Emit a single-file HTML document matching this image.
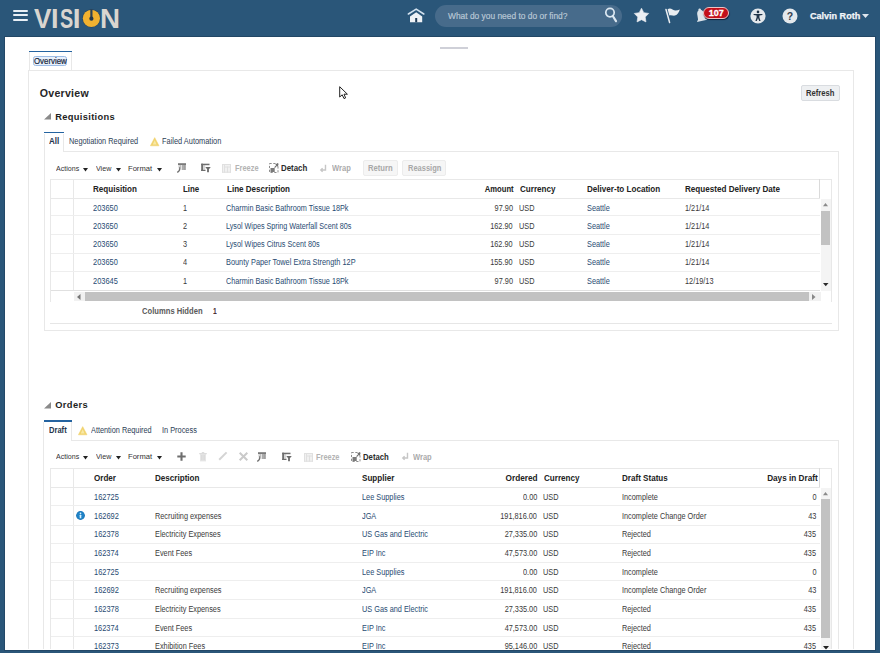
<!DOCTYPE html>
<html><head><meta charset="utf-8">
<style>
*{box-sizing:border-box;margin:0;padding:0}
html,body{width:880px;height:653px;overflow:hidden}
body{background:#2a5679;font-family:"Liberation Sans",sans-serif;position:relative;color:#333}
.a{position:absolute;white-space:nowrap}
svg.a{overflow:visible}
</style></head><body>

<div class="a" style="left:12.60px;top:9.70px;width:15.40px;height:2.20px;background:#e8eff6;border-radius:1px"></div>
<div class="a" style="left:12.60px;top:14.30px;width:15.40px;height:2.20px;background:#e8eff6;border-radius:1px"></div>
<div class="a" style="left:12.60px;top:18.90px;width:15.40px;height:2.20px;background:#e8eff6;border-radius:1px"></div>
<div class="a" style="left:33.50px;top:4.00px;font-size:28px;line-height:30px;font-weight:bold;color:#d9d5d0;transform:scaleX(0.93);transform-origin:0 0">V</div>
<div class="a" style="left:51.22px;top:4.00px;font-size:28px;line-height:30px;font-weight:bold;color:#d9d5d0;transform:scaleX(0.97);transform-origin:0 0">I</div>
<div class="a" style="left:59.79px;top:4.00px;font-size:28px;line-height:30px;font-weight:bold;color:#d9d5d0;transform:scaleX(0.71);transform-origin:0 0">S</div>
<div class="a" style="left:72.77px;top:4.00px;font-size:28px;line-height:30px;font-weight:bold;color:#d9d5d0;transform:scaleX(1.0);transform-origin:0 0">I</div>
<div class="a" style="left:99.99px;top:4.00px;font-size:28px;line-height:30px;font-weight:bold;color:#d9d5d0;transform:scaleX(0.99);transform-origin:0 0">N</div>
<svg class="a" style="left:81.6px;top:8.8px" width="19" height="19" viewBox="0 0 19 19"><circle cx="9.4" cy="9.3" r="9.1" fill="#20405e"/><circle cx="9.4" cy="9.3" r="8.6" fill="#f1b230"/><rect x="8.3" y="0" width="2.2" height="9.5" fill="#2a4258"/><circle cx="9.4" cy="9.7" r="2.1" fill="#22384c"/></svg>
<svg class="a" style="left:406px;top:7px" width="20" height="17" viewBox="0 0 20 17"><path d="M2.4 7 L10.2 2.1 L17.8 7" fill="none" stroke="#d3e2ef" stroke-width="1.6" stroke-linecap="round"/><path d="M4 9.6 L10.2 5.3 L16.2 9.6 V15.2 H4 Z" fill="#eef2f6"/><rect x="9.2" y="11" width="2" height="4.2" fill="#1f3a55"/></svg>
<div class="a" style="left:435.00px;top:5.00px;width:187.00px;height:22.00px;background:#476b8b;border-radius:11px"></div>
<div class="a" style="left:448.46px;top:10.27px;font-size:9.6px;line-height:12.0px;font-weight:400;color:#b9c7d5;letter-spacing:0px;transform:scaleX(0.8749);transform-origin:0 0;-webkit-text-stroke:0.2px #b9c7d5">What do you need to do or find?</div>
<svg class="a" style="left:604px;top:7px" width="14" height="16" viewBox="0 0 14 16"><circle cx="6" cy="5.6" r="4.2" fill="none" stroke="#dce8f2" stroke-width="1.7"/><path d="M8.8 9 L12 14.2" stroke="#dce8f2" stroke-width="2.2" stroke-linecap="round"/></svg>
<svg class="a" style="left:634.2px;top:8.2px" width="15" height="15" viewBox="0 0 15 15"><path d="M7.50 0.20 L9.79 4.64 L14.73 5.45 L11.21 9.01 L11.97 13.95 L7.50 11.70 L3.03 13.95 L3.79 9.01 L0.27 5.45 L5.21 4.64 Z" fill="#eceff3" stroke="#eceff3" stroke-width="0.6" stroke-linejoin="round"/></svg>
<svg class="a" style="left:664px;top:8px" width="17" height="16" viewBox="0 0 17 16"><path d="M2 1.5 L5.6 14.5" stroke="#e9edf1" stroke-width="1.5" stroke-linecap="round"/><path d="M3.6 1.2 C5.5 0.2 7 0.6 8.5 1.6 C10.5 2.8 12.5 2.8 15.8 1.6 C15 4.5 13.5 7 11 7.6 C9 8 7.5 6.8 5.4 7.5 Z" fill="#e9edf1"/></svg>
<svg class="a" style="left:695px;top:8px" width="12" height="16" viewBox="0 0 12 16"><g transform="rotate(-12 6 8)"><path d="M6 1.8 C3.2 1.8 2.6 4.5 2.6 7 L2.4 10.8 L0.8 13 L11.2 13 L9.6 10.8 L9.4 7 C9.4 4.5 8.8 1.8 6 1.8 Z" fill="#dde4ea"/><circle cx="6" cy="1.6" r="1.3" fill="#dde4ea"/></g></svg>
<div class="a" style="left:703.4px;top:6.8px;width:25.6px;height:12.2px;border-radius:6.1px;background:#c3101a;border:1px solid #eec4c4;box-shadow:0.5px 1px 0.8px rgba(10,20,40,0.8);color:#fff;font-size:9px;font-weight:bold;line-height:10.2px;text-align:center;-webkit-text-stroke:0.3px #fff">107</div>
<svg class="a" style="left:750.2px;top:7.6px" width="16" height="16" viewBox="0 0 16 16"><circle cx="8" cy="8" r="7.6" fill="#e4e8ec"/><circle cx="8" cy="3.9" r="1.3" fill="#203448"/><path d="M3.6 6 L12.4 6 L12.4 6.9 L9.4 7.5 L9.4 9.6 L10.6 12.9 L9.2 12.9 L8 10 L6.8 12.9 L5.4 12.9 L6.6 9.6 L6.6 7.5 L3.6 6.9 Z" fill="#203448"/></svg>
<svg class="a" style="left:782.0px;top:7.8px" width="16" height="16" viewBox="0 0 16 16"><circle cx="8" cy="8" r="7.5" fill="#e4e8ec"/><text x="8" y="11.9" text-anchor="middle" font-family="Liberation Sans" font-weight="bold" font-size="10.5" fill="#35404c">?</text></svg>
<div class="a" style="left:810.14px;top:10.07px;font-size:9.4px;line-height:11.75px;font-weight:700;color:#f4f7fa;letter-spacing:0px;transform:scaleX(0.9634);transform-origin:0 0;-webkit-text-stroke:0.25px #f4f7fa">Calvin Roth</div>
<svg class="a" style="left:862px;top:14px" width="7" height="4" viewBox="0 0 7 4"><path d="M0 0 L7 0 L3.5 4 Z" fill="#dfe6ee"/></svg>
<div class="a" style="left:4.00px;top:36.00px;width:872.00px;height:1.00px;background:#224765;"></div>
<div class="a" style="left:4.00px;top:36.00px;width:1.00px;height:614.00px;background:#234868;"></div>
<div class="a" style="left:875.00px;top:36.00px;width:1.00px;height:614.00px;background:#234868;"></div>
<div class="a" style="left:5.00px;top:37.00px;width:870.00px;height:613.00px;background:#fff;"></div>
<div class="a" style="left:440.00px;top:47.00px;width:28.00px;height:2.00px;background:#cfd0d8;"></div>
<div class="a" style="left:29.00px;top:50.80px;width:43.00px;height:1.40px;background:#2463a0;"></div>
<div class="a" style="left:29.00px;top:52.00px;width:1.00px;height:18.00px;background:#e8e8e8;"></div>
<div class="a" style="left:71.00px;top:52.00px;width:1.00px;height:18.00px;background:#e8e8e8;"></div>
<div class="a" style="left:33.40px;top:56.00px;width:33.80px;height:10.00px;background:#e8f0fb;border:1px solid #9dbde6;border-radius:2.5px"></div>
<div class="a" style="left:33.73px;top:55.65px;font-size:8.6px;line-height:10.75px;font-weight:400;color:#14243a;letter-spacing:0px;transform:scaleX(0.9139);transform-origin:0 0;-webkit-text-stroke:0.2px #14243a">Overview</div>
<div class="a" style="left:28.00px;top:70.00px;width:826.00px;height:1.00px;background:#e8e8e8;"></div>
<div class="a" style="left:28.00px;top:70.00px;width:1.00px;height:579.00px;background:#e8e8e8;"></div>
<div class="a" style="left:853.00px;top:70.00px;width:1.00px;height:579.00px;background:#e8e8e8;"></div>
<div class="a" style="left:39.78px;top:86.90px;font-size:10.6px;line-height:13.25px;font-weight:700;color:#262626;letter-spacing:0.25px;">Overview</div>
<div class="a" style="left:801.00px;top:85.00px;width:39.00px;height:16.00px;background:#eef0f2;border:1px solid #d9dce0;border-radius:2px"></div>
<div class="a" style="left:806.18px;top:87.74px;font-size:8.4px;line-height:10.5px;font-weight:700;color:#333;letter-spacing:0px;transform:scaleX(0.9140);transform-origin:0 0;">Refresh</div>
<svg class="a" style="left:44.2px;top:112.5px" width="7" height="7" viewBox="0 0 7 7"><path d="M7 0 L7 6.5 L0 6.5 Z" fill="#8a8a8a"/></svg>
<div class="a" style="left:55.27px;top:111.77px;font-size:9.3px;line-height:11.62px;font-weight:700;color:#1e1e1e;letter-spacing:0.33px;">Requisitions</div>
<div class="a" style="left:44.00px;top:131.60px;width:20.00px;height:1.60px;background:#2463a0;"></div>
<div class="a" style="left:44.00px;top:133.50px;width:1.00px;height:17.50px;background:#e8e8e8;"></div>
<div class="a" style="left:63.00px;top:133.50px;width:1.00px;height:17.50px;background:#e8e8e8;"></div>
<div class="a" style="left:49.00px;top:135.74px;font-size:8.4px;line-height:10.5px;font-weight:700;color:#24344c;letter-spacing:0px;transform:scaleX(0.9564);transform-origin:0 0;">All</div>
<div class="a" style="left:68.99px;top:135.74px;font-size:8.4px;line-height:10.5px;font-weight:400;color:#2c3e56;letter-spacing:0px;transform:scaleX(0.8777);transform-origin:0 0;">Negotiation Required</div>
<svg class="a" style="left:150.2px;top:137.3px" width="10" height="10" viewBox="0 0 10 10"><path d="M4.7 0.6 L9 8.8 L0.4 8.8 Z" fill="#f1d36e" stroke="#f1d36e" stroke-width="0.5" stroke-linejoin="round"/><path d="M4.7 3.2 L6.6 7.6 L2.8 7.6 Z" fill="#f8e9a8"/></svg>
<div class="a" style="left:161.99px;top:135.74px;font-size:8.4px;line-height:10.5px;font-weight:400;color:#2c3e56;letter-spacing:0px;transform:scaleX(0.8845);transform-origin:0 0;">Failed Automation</div>
<div class="a" style="left:63.00px;top:151.00px;width:776.00px;height:1.00px;background:#e8e8e8;"></div>
<div class="a" style="left:44.00px;top:151.00px;width:1.00px;height:180.00px;background:#e8e8e8;"></div>
<div class="a" style="left:838.00px;top:151.00px;width:1.00px;height:180.00px;background:#e8e8e8;"></div>
<div class="a" style="left:44.00px;top:330.00px;width:795.00px;height:1.00px;background:#e8e8e8;"></div>
<div class="a" style="left:56.08px;top:163.83px;font-size:8.0px;line-height:10.0px;font-weight:400;color:#333;letter-spacing:0px;transform:scaleX(0.8828);transform-origin:0 0;">Actions</div>
<svg class="a" style="left:83.4px;top:167.6px" width="5" height="4" viewBox="0 0 5 4"><path d="M0 0 L5 0 L2.5 3.6 Z" fill="#222"/></svg>
<div class="a" style="left:96.36px;top:163.83px;font-size:8.0px;line-height:10.0px;font-weight:400;color:#333;letter-spacing:0px;transform:scaleX(0.8906);transform-origin:0 0;">View</div>
<svg class="a" style="left:116.2px;top:167.6px" width="5" height="4" viewBox="0 0 5 4"><path d="M0 0 L5 0 L2.5 3.6 Z" fill="#222"/></svg>
<div class="a" style="left:128.27px;top:163.83px;font-size:8.0px;line-height:10.0px;font-weight:400;color:#333;letter-spacing:0px;transform:scaleX(0.9504);transform-origin:0 0;">Format</div>
<svg class="a" style="left:156.7px;top:167.6px" width="5" height="4" viewBox="0 0 5 4"><path d="M0 0 L5 0 L2.5 3.6 Z" fill="#222"/></svg>
<svg class="a" style="left:174px;top:160px" width="16" height="16" viewBox="0 0 16 16"><rect x="4" y="5" width="8" height="5" fill="#e2e2e2"/><rect x="8.6" y="5" width="3.4" height="5" fill="#b0b0b0"/><path d="M6.2 5 V10 M8.6 5 V10 M10.4 5 V10" stroke="#9a9a9a" stroke-width="0.7"/><rect x="4" y="3.2" width="8" height="1.8" fill="#7a7a7a"/><path d="M5.8 7.2 C6.1 9.4 5.8 11.2 3.2 12.3" fill="none" stroke="#ffffff" stroke-width="2.6"/><path d="M5.8 7.2 C6.1 9.4 5.8 11.2 3.2 12.3" fill="none" stroke="#6f6f6f" stroke-width="1.4"/></svg>
<svg class="a" style="left:198px;top:160px" width="16" height="16" viewBox="0 0 16 16"><rect x="5" y="5.1" width="2.2" height="4.7" fill="#d6d6d6"/><rect x="3.2" y="3.7" width="8.3" height="1.5" fill="#6e6e6e"/><rect x="3.2" y="3.7" width="1.8" height="7.3" fill="#6e6e6e"/><rect x="3.2" y="9.8" width="4.3" height="1.2" fill="#6e6e6e"/><path d="M7.3 7 H12.8 L10.9 9.2 V12.3 H9.1 V9.2 Z" fill="#6a6a6a"/></svg>
<svg class="a" style="left:219px;top:160px" width="16" height="16" viewBox="0 0 16 16"><rect x="3" y="4" width="9" height="8.7" fill="#f1f1f1"/><path d="M3 4.5 H12 M3.5 4 V12.7 M5.5 4 V12.7 M8.5 6.5 V12.7 M11.5 4 V12.7 M5.5 7 H12 M3 12.2 H12" stroke="#e0e0e0" stroke-width="1"/></svg>
<div class="a" style="left:234.50px;top:163.44px;font-size:8.4px;line-height:10.5px;font-weight:700;color:#b4b4b4;letter-spacing:0px;transform:scaleX(0.8887);transform-origin:0 0;">Freeze</div>
<svg class="a" style="left:266px;top:160px" width="16" height="16" viewBox="0 0 16 16"><rect x="3.5" y="3.5" width="8.5" height="9" fill="none" stroke="#8c8c8c" stroke-width="1" stroke-dasharray="2.2 1.6"/><rect x="4.5" y="8" width="4.2" height="4" fill="#7a7a7a"/><path d="M8.6 7.6 L11.4 4.6 M9.6 4.4 H11.6 V6.4" fill="none" stroke="#707070" stroke-width="1.1"/></svg>
<div class="a" style="left:281.47px;top:163.44px;font-size:8.4px;line-height:10.5px;font-weight:700;color:#2a2a2a;letter-spacing:0px;transform:scaleX(0.9398);transform-origin:0 0;">Detach</div>
<svg class="a" style="left:319px;top:163.5px" width="10" height="10" viewBox="0 0 10 10"><path d="M6.5 0.8 V6 H2 M3.6 4.2 L1.8 6 L3.6 7.8" fill="none" stroke="#c6c6c6" stroke-width="1.4"/></svg>
<div class="a" style="left:331.50px;top:163.44px;font-size:8.4px;line-height:10.5px;font-weight:700;color:#ababab;letter-spacing:0px;transform:scaleX(0.9026);transform-origin:0 0;">Wrap</div>
<div class="a" style="left:363.30px;top:160.30px;width:34.50px;height:16.00px;background:#f6f6f6;border:1px solid #ececec;border-radius:2px"></div>
<div class="a" style="left:368.18px;top:163.44px;font-size:8.4px;line-height:10.5px;font-weight:700;color:#a8a8a8;letter-spacing:0px;transform:scaleX(0.9155);transform-origin:0 0;">Return</div>
<div class="a" style="left:402.40px;top:160.30px;width:43.70px;height:16.00px;background:#f6f6f6;border:1px solid #ececec;border-radius:2px"></div>
<div class="a" style="left:407.79px;top:163.44px;font-size:8.4px;line-height:10.5px;font-weight:700;color:#a8a8a8;letter-spacing:0px;transform:scaleX(0.8961);transform-origin:0 0;">Reassign</div>
<div class="a" style="left:50.20px;top:179.00px;width:781.80px;height:1.00px;background:#e8e8e8;"></div>
<div class="a" style="left:50.00px;top:179.30px;width:1.00px;height:122.70px;background:#e8e8e8;"></div>
<div class="a" style="left:73.00px;top:179.30px;width:1.00px;height:111.70px;background:#e8e8e8;"></div>
<div class="a" style="left:831.00px;top:179.30px;width:1.00px;height:122.70px;background:#e8e8e8;"></div>
<div class="a" style="left:819.00px;top:179.30px;width:1.00px;height:19.20px;background:#dadada;"></div>
<div class="a" style="left:50.70px;top:198.00px;width:769.30px;height:1.00px;background:#e8e8e8;"></div>
<div class="a" style="left:93.25px;top:183.64px;font-size:8.4px;line-height:10.5px;font-weight:700;color:#222;letter-spacing:0px;transform:scaleX(0.9631);transform-origin:0 0;">Requisition</div>
<div class="a" style="left:183.46px;top:183.64px;font-size:8.4px;line-height:10.5px;font-weight:700;color:#222;letter-spacing:0px;transform:scaleX(0.9439);transform-origin:0 0;">Line</div>
<div class="a" style="left:226.76px;top:183.64px;font-size:8.4px;line-height:10.5px;font-weight:700;color:#222;letter-spacing:0px;transform:scaleX(0.9607);transform-origin:0 0;">Line Description</div>
<div class="a" style="right:366.31px;top:183.64px;font-size:8.4px;line-height:10.5px;font-weight:700;color:#222;letter-spacing:0px;transform:scaleX(0.9135);transform-origin:100% 0;">Amount</div>
<div class="a" style="left:519.68px;top:183.64px;font-size:8.4px;line-height:10.5px;font-weight:700;color:#222;letter-spacing:0px;transform:scaleX(0.9650);transform-origin:0 0;">Currency</div>
<div class="a" style="left:587.15px;top:183.64px;font-size:8.4px;line-height:10.5px;font-weight:700;color:#222;letter-spacing:0px;transform:scaleX(0.9650);transform-origin:0 0;">Deliver-to Location</div>
<div class="a" style="left:684.95px;top:183.64px;font-size:8.4px;line-height:10.5px;font-weight:700;color:#222;letter-spacing:0px;transform:scaleX(0.9675);transform-origin:0 0;">Requested Delivery Date</div>
<div class="a" style="left:50.70px;top:215.00px;width:769.30px;height:1.00px;background:#eeeeee;"></div>
<div class="a" style="left:93.03px;top:202.84px;font-size:8.4px;line-height:10.5px;font-weight:400;color:#284b72;letter-spacing:0px;transform:scaleX(0.8871);transform-origin:0 0;">203650</div>
<div class="a" style="left:183.40px;top:202.84px;font-size:8.4px;line-height:10.5px;font-weight:400;color:#3a3a3a;letter-spacing:0px;transform:scaleX(0.8750);transform-origin:0 0;">1</div>
<div class="a" style="left:226.44px;top:202.84px;font-size:8.4px;line-height:10.5px;font-weight:400;color:#284b72;letter-spacing:0px;transform:scaleX(0.8686);transform-origin:0 0;">Charmin Basic Bathroom Tissue 18Pk</div>
<div class="a" style="right:366.92px;top:202.84px;font-size:8.4px;line-height:10.5px;font-weight:400;color:#3a3a3a;letter-spacing:0px;transform:scaleX(0.8750);transform-origin:100% 0;">97.90</div>
<div class="a" style="left:519.43px;top:202.84px;font-size:8.4px;line-height:10.5px;font-weight:400;color:#3a3a3a;letter-spacing:0px;transform:scaleX(0.8750);transform-origin:0 0;">USD</div>
<div class="a" style="left:586.67px;top:202.84px;font-size:8.4px;line-height:10.5px;font-weight:400;color:#284b72;letter-spacing:0px;transform:scaleX(0.8750);transform-origin:0 0;">Seattle</div>
<div class="a" style="left:684.95px;top:202.84px;font-size:8.4px;line-height:10.5px;font-weight:400;color:#3a3a3a;letter-spacing:0px;transform:scaleX(0.8750);transform-origin:0 0;">1/21/14</div>
<div class="a" style="left:50.70px;top:234.00px;width:769.30px;height:1.00px;background:#eeeeee;"></div>
<div class="a" style="left:93.03px;top:221.04px;font-size:8.4px;line-height:10.5px;font-weight:400;color:#284b72;letter-spacing:0px;transform:scaleX(0.8871);transform-origin:0 0;">203650</div>
<div class="a" style="left:183.40px;top:221.04px;font-size:8.4px;line-height:10.5px;font-weight:400;color:#3a3a3a;letter-spacing:0px;transform:scaleX(0.8750);transform-origin:0 0;">2</div>
<div class="a" style="left:226.21px;top:221.04px;font-size:8.4px;line-height:10.5px;font-weight:400;color:#284b72;letter-spacing:0px;transform:scaleX(0.8581);transform-origin:0 0;">Lysol Wipes Spring Waterfall Scent 80s</div>
<div class="a" style="right:366.92px;top:221.04px;font-size:8.4px;line-height:10.5px;font-weight:400;color:#3a3a3a;letter-spacing:0px;transform:scaleX(0.8750);transform-origin:100% 0;">162.90</div>
<div class="a" style="left:519.43px;top:221.04px;font-size:8.4px;line-height:10.5px;font-weight:400;color:#3a3a3a;letter-spacing:0px;transform:scaleX(0.8750);transform-origin:0 0;">USD</div>
<div class="a" style="left:586.67px;top:221.04px;font-size:8.4px;line-height:10.5px;font-weight:400;color:#284b72;letter-spacing:0px;transform:scaleX(0.8750);transform-origin:0 0;">Seattle</div>
<div class="a" style="left:684.95px;top:221.04px;font-size:8.4px;line-height:10.5px;font-weight:400;color:#3a3a3a;letter-spacing:0px;transform:scaleX(0.8750);transform-origin:0 0;">1/21/14</div>
<div class="a" style="left:50.70px;top:253.00px;width:769.30px;height:1.00px;background:#eeeeee;"></div>
<div class="a" style="left:93.03px;top:239.14px;font-size:8.4px;line-height:10.5px;font-weight:400;color:#284b72;letter-spacing:0px;transform:scaleX(0.8871);transform-origin:0 0;">203650</div>
<div class="a" style="left:183.40px;top:239.14px;font-size:8.4px;line-height:10.5px;font-weight:400;color:#3a3a3a;letter-spacing:0px;transform:scaleX(0.8750);transform-origin:0 0;">3</div>
<div class="a" style="left:226.20px;top:239.14px;font-size:8.4px;line-height:10.5px;font-weight:400;color:#284b72;letter-spacing:0px;transform:scaleX(0.8616);transform-origin:0 0;">Lysol Wipes Citrus Scent 80s</div>
<div class="a" style="right:366.92px;top:239.14px;font-size:8.4px;line-height:10.5px;font-weight:400;color:#3a3a3a;letter-spacing:0px;transform:scaleX(0.8750);transform-origin:100% 0;">162.90</div>
<div class="a" style="left:519.43px;top:239.14px;font-size:8.4px;line-height:10.5px;font-weight:400;color:#3a3a3a;letter-spacing:0px;transform:scaleX(0.8750);transform-origin:0 0;">USD</div>
<div class="a" style="left:586.67px;top:239.14px;font-size:8.4px;line-height:10.5px;font-weight:400;color:#284b72;letter-spacing:0px;transform:scaleX(0.8750);transform-origin:0 0;">Seattle</div>
<div class="a" style="left:684.95px;top:239.14px;font-size:8.4px;line-height:10.5px;font-weight:400;color:#3a3a3a;letter-spacing:0px;transform:scaleX(0.8750);transform-origin:0 0;">1/21/14</div>
<div class="a" style="left:50.70px;top:271.00px;width:769.30px;height:1.00px;background:#eeeeee;"></div>
<div class="a" style="left:93.03px;top:257.44px;font-size:8.4px;line-height:10.5px;font-weight:400;color:#284b72;letter-spacing:0px;transform:scaleX(0.8871);transform-origin:0 0;">203650</div>
<div class="a" style="left:183.40px;top:257.44px;font-size:8.4px;line-height:10.5px;font-weight:400;color:#3a3a3a;letter-spacing:0px;transform:scaleX(0.8750);transform-origin:0 0;">4</div>
<div class="a" style="left:226.19px;top:257.44px;font-size:8.4px;line-height:10.5px;font-weight:400;color:#284b72;letter-spacing:0px;transform:scaleX(0.8791);transform-origin:0 0;">Bounty Paper Towel Extra Strength 12P</div>
<div class="a" style="right:366.92px;top:257.44px;font-size:8.4px;line-height:10.5px;font-weight:400;color:#3a3a3a;letter-spacing:0px;transform:scaleX(0.8750);transform-origin:100% 0;">155.90</div>
<div class="a" style="left:519.43px;top:257.44px;font-size:8.4px;line-height:10.5px;font-weight:400;color:#3a3a3a;letter-spacing:0px;transform:scaleX(0.8750);transform-origin:0 0;">USD</div>
<div class="a" style="left:586.67px;top:257.44px;font-size:8.4px;line-height:10.5px;font-weight:400;color:#284b72;letter-spacing:0px;transform:scaleX(0.8750);transform-origin:0 0;">Seattle</div>
<div class="a" style="left:684.95px;top:257.44px;font-size:8.4px;line-height:10.5px;font-weight:400;color:#3a3a3a;letter-spacing:0px;transform:scaleX(0.8750);transform-origin:0 0;">1/21/14</div>
<div class="a" style="left:93.03px;top:275.74px;font-size:8.4px;line-height:10.5px;font-weight:400;color:#284b72;letter-spacing:0px;transform:scaleX(0.8878);transform-origin:0 0;">203645</div>
<div class="a" style="left:183.40px;top:275.74px;font-size:8.4px;line-height:10.5px;font-weight:400;color:#3a3a3a;letter-spacing:0px;transform:scaleX(0.8750);transform-origin:0 0;">1</div>
<div class="a" style="left:226.44px;top:275.74px;font-size:8.4px;line-height:10.5px;font-weight:400;color:#284b72;letter-spacing:0px;transform:scaleX(0.8686);transform-origin:0 0;">Charmin Basic Bathroom Tissue 18Pk</div>
<div class="a" style="right:366.92px;top:275.74px;font-size:8.4px;line-height:10.5px;font-weight:400;color:#3a3a3a;letter-spacing:0px;transform:scaleX(0.8750);transform-origin:100% 0;">97.90</div>
<div class="a" style="left:519.43px;top:275.74px;font-size:8.4px;line-height:10.5px;font-weight:400;color:#3a3a3a;letter-spacing:0px;transform:scaleX(0.8750);transform-origin:0 0;">USD</div>
<div class="a" style="left:586.67px;top:275.74px;font-size:8.4px;line-height:10.5px;font-weight:400;color:#284b72;letter-spacing:0px;transform:scaleX(0.8750);transform-origin:0 0;">Seattle</div>
<div class="a" style="left:684.95px;top:275.74px;font-size:8.4px;line-height:10.5px;font-weight:400;color:#3a3a3a;letter-spacing:0px;transform:scaleX(0.8750);transform-origin:0 0;">12/19/13</div>
<div class="a" style="left:50.70px;top:290.00px;width:769.30px;height:1.00px;background:#e0e0e0;"></div>
<div class="a" style="left:820.50px;top:198.50px;width:10.50px;height:92.00px;background:#f4f4f4;"></div>
<div class="a" style="left:821.00px;top:210.60px;width:9.00px;height:34.40px;background:#c2c2c2;"></div>
<svg class="a" style="left:822.7px;top:203.2px" width="5" height="3.5" viewBox="0 0 5 3.5"><path d="M0 3.2 L5 3.2 L2.5 0 Z" fill="#8a8a8a"/></svg>
<svg class="a" style="left:822.7px;top:282.5px" width="5.5" height="3.5" viewBox="0 0 5.5 3.5"><path d="M0 0 L5.5 0 L2.75 3.3 Z" fill="#2a2a2a"/></svg>
<div class="a" style="left:74.00px;top:291.50px;width:746.50px;height:9.50px;background:#f1f1f1;"></div>
<div class="a" style="left:85.00px;top:292.00px;width:724.00px;height:8.50px;background:#c2c2c2;"></div>
<svg class="a" style="left:77px;top:294px" width="4" height="6" viewBox="0 0 4 6"><path d="M3.5 0 L3.5 6 L0 3 Z" fill="#777"/></svg>
<svg class="a" style="left:812px;top:294px" width="4" height="6" viewBox="0 0 4 6"><path d="M0 0 L0 6 L3.5 3 Z" fill="#888"/></svg>
<div class="a" style="left:141.99px;top:305.74px;font-size:8.4px;line-height:10.5px;font-weight:700;color:#5a5a5a;letter-spacing:0px;transform:scaleX(0.9105);transform-origin:0 0;">Columns Hidden</div>
<div class="a" style="left:212.98px;top:305.74px;font-size:8.4px;line-height:10.5px;font-weight:700;color:#4a2f35;letter-spacing:0px;transform:scaleX(0.8000);transform-origin:0 0;">1</div>
<div class="a" style="left:50.00px;top:323.00px;width:782.00px;height:1.00px;background:#e6e6e6;"></div>
<svg class="a" style="left:44px;top:401.5px" width="7" height="7" viewBox="0 0 7 7"><path d="M7 0 L7 6.5 L0 6.5 Z" fill="#8a8a8a"/></svg>
<div class="a" style="left:55.23px;top:399.77px;font-size:9.3px;line-height:11.62px;font-weight:700;color:#1e1e1e;letter-spacing:0.38px;">Orders</div>
<div class="a" style="left:44.00px;top:420.20px;width:28.00px;height:1.60px;background:#2463a0;"></div>
<div class="a" style="left:43.00px;top:422.00px;width:1.00px;height:18.50px;background:#e8e8e8;"></div>
<div class="a" style="left:71.00px;top:422.00px;width:1.00px;height:18.50px;background:#e8e8e8;"></div>
<div class="a" style="left:48.89px;top:424.54px;font-size:8.4px;line-height:10.5px;font-weight:700;color:#24344c;letter-spacing:0px;transform:scaleX(0.9038);transform-origin:0 0;">Draft</div>
<svg class="a" style="left:77.8px;top:425.9px" width="10" height="10" viewBox="0 0 10 10"><path d="M4.7 0.6 L9 8.8 L0.4 8.8 Z" fill="#f1d36e" stroke="#f1d36e" stroke-width="0.5" stroke-linejoin="round"/><path d="M4.7 3.2 L6.6 7.6 L2.8 7.6 Z" fill="#f8e9a8"/></svg>
<div class="a" style="left:90.68px;top:424.54px;font-size:8.4px;line-height:10.5px;font-weight:400;color:#2c3e56;letter-spacing:0px;transform:scaleX(0.8736);transform-origin:0 0;">Attention Required</div>
<div class="a" style="left:162.32px;top:424.54px;font-size:8.4px;line-height:10.5px;font-weight:400;color:#2c3e56;letter-spacing:0px;transform:scaleX(0.8804);transform-origin:0 0;">In Process</div>
<div class="a" style="left:71.00px;top:440.00px;width:768.00px;height:1.00px;background:#e8e8e8;"></div>
<div class="a" style="left:43.00px;top:440.00px;width:1.00px;height:209.00px;background:#e8e8e8;"></div>
<div class="a" style="left:838.00px;top:440.00px;width:1.00px;height:209.00px;background:#e8e8e8;"></div>
<div class="a" style="left:56.08px;top:452.43px;font-size:8.0px;line-height:10.0px;font-weight:400;color:#333;letter-spacing:0px;transform:scaleX(0.8828);transform-origin:0 0;">Actions</div>
<svg class="a" style="left:83.4px;top:456.2px" width="5" height="4" viewBox="0 0 5 4"><path d="M0 0 L5 0 L2.5 3.6 Z" fill="#222"/></svg>
<div class="a" style="left:96.36px;top:452.43px;font-size:8.0px;line-height:10.0px;font-weight:400;color:#333;letter-spacing:0px;transform:scaleX(0.8906);transform-origin:0 0;">View</div>
<svg class="a" style="left:116.2px;top:456.2px" width="5" height="4" viewBox="0 0 5 4"><path d="M0 0 L5 0 L2.5 3.6 Z" fill="#222"/></svg>
<div class="a" style="left:128.27px;top:452.43px;font-size:8.0px;line-height:10.0px;font-weight:400;color:#333;letter-spacing:0px;transform:scaleX(0.9504);transform-origin:0 0;">Format</div>
<svg class="a" style="left:156.7px;top:456.2px" width="5" height="4" viewBox="0 0 5 4"><path d="M0 0 L5 0 L2.5 3.6 Z" fill="#222"/></svg>
<svg class="a" style="left:177.2px;top:451.5px" width="9" height="9" viewBox="0 0 9 9"><path d="M4.5 0.3 V8.7 M0.3 4.5 H8.7" stroke="#6e6e6e" stroke-width="2.1"/></svg>
<svg class="a" style="left:198.6px;top:451.5px" width="8" height="10" viewBox="0 0 8 10"><rect x="1" y="1.6" width="6" height="7.8" fill="#e6e6e6"/><path d="M0.2 1.6 H7.8 M2.8 0.6 H5.2" stroke="#dcdcdc" stroke-width="1.2"/><path d="M2.6 3 V8.2 M4 3 V8.2 M5.4 3 V8.2" stroke="#d2d2d2" stroke-width="0.6"/></svg>
<svg class="a" style="left:217.5px;top:451.3px" width="10" height="10" viewBox="0 0 10 10"><path d="M1.2 8.8 L8.6 1.4" stroke="#d4d4d4" stroke-width="2"/></svg>
<svg class="a" style="left:238.6px;top:451.6px" width="9" height="9" viewBox="0 0 9 9"><path d="M0.7 0.7 L8.3 8.3 M8.3 0.7 L0.7 8.3" stroke="#cacaca" stroke-width="2"/></svg>
<svg class="a" style="left:254.4px;top:448.6px" width="16" height="16" viewBox="0 0 16 16"><rect x="4" y="5" width="8" height="5" fill="#e2e2e2"/><rect x="8.6" y="5" width="3.4" height="5" fill="#b0b0b0"/><path d="M6.2 5 V10 M8.6 5 V10 M10.4 5 V10" stroke="#9a9a9a" stroke-width="0.7"/><rect x="4" y="3.2" width="8" height="1.8" fill="#7a7a7a"/><path d="M5.8 7.2 C6.1 9.4 5.8 11.2 3.2 12.3" fill="none" stroke="#ffffff" stroke-width="2.6"/><path d="M5.8 7.2 C6.1 9.4 5.8 11.2 3.2 12.3" fill="none" stroke="#6f6f6f" stroke-width="1.4"/></svg>
<svg class="a" style="left:279.1px;top:448.6px" width="16" height="16" viewBox="0 0 16 16"><rect x="5" y="5.1" width="2.2" height="4.7" fill="#d6d6d6"/><rect x="3.2" y="3.7" width="8.3" height="1.5" fill="#6e6e6e"/><rect x="3.2" y="3.7" width="1.8" height="7.3" fill="#6e6e6e"/><rect x="3.2" y="9.8" width="4.3" height="1.2" fill="#6e6e6e"/><path d="M7.3 7 H12.8 L10.9 9.2 V12.3 H9.1 V9.2 Z" fill="#6a6a6a"/></svg>
<svg class="a" style="left:301px;top:448.6px" width="16" height="16" viewBox="0 0 16 16"><rect x="3" y="4" width="9" height="8.7" fill="#f1f1f1"/><path d="M3 4.5 H12 M3.5 4 V12.7 M5.5 4 V12.7 M8.5 6.5 V12.7 M11.5 4 V12.7 M5.5 7 H12 M3 12.2 H12" stroke="#e0e0e0" stroke-width="1"/></svg>
<div class="a" style="left:315.90px;top:452.04px;font-size:8.4px;line-height:10.5px;font-weight:700;color:#b4b4b4;letter-spacing:0px;transform:scaleX(0.8849);transform-origin:0 0;">Freeze</div>
<svg class="a" style="left:347.5px;top:448.6px" width="16" height="16" viewBox="0 0 16 16"><rect x="3.5" y="3.5" width="8.5" height="9" fill="none" stroke="#8c8c8c" stroke-width="1" stroke-dasharray="2.2 1.6"/><rect x="4.5" y="8" width="4.2" height="4" fill="#7a7a7a"/><path d="M8.6 7.6 L11.4 4.6 M9.6 4.4 H11.6 V6.4" fill="none" stroke="#707070" stroke-width="1.1"/></svg>
<div class="a" style="left:363.28px;top:452.04px;font-size:8.4px;line-height:10.5px;font-weight:700;color:#2a2a2a;letter-spacing:0px;transform:scaleX(0.9249);transform-origin:0 0;">Detach</div>
<svg class="a" style="left:400.5px;top:452.1px" width="10" height="10" viewBox="0 0 10 10"><path d="M6.5 0.8 V6 H2 M3.6 4.2 L1.8 6 L3.6 7.8" fill="none" stroke="#c6c6c6" stroke-width="1.4"/></svg>
<div class="a" style="left:413.20px;top:452.04px;font-size:8.4px;line-height:10.5px;font-weight:700;color:#ababab;letter-spacing:0px;transform:scaleX(0.8977);transform-origin:0 0;">Wrap</div>
<div class="a" style="left:50.20px;top:468.00px;width:781.80px;height:1.00px;background:#e8e8e8;"></div>
<div class="a" style="left:50.00px;top:468.20px;width:1.00px;height:180.80px;background:#e8e8e8;"></div>
<div class="a" style="left:73.00px;top:468.20px;width:1.00px;height:180.80px;background:#e8e8e8;"></div>
<div class="a" style="left:831.00px;top:468.20px;width:1.00px;height:180.80px;background:#e8e8e8;"></div>
<div class="a" style="left:819.00px;top:468.20px;width:1.00px;height:19.80px;background:#dadada;"></div>
<div class="a" style="left:50.70px;top:487.00px;width:769.30px;height:1.00px;background:#e8e8e8;"></div>
<div class="a" style="left:93.68px;top:472.54px;font-size:8.4px;line-height:10.5px;font-weight:700;color:#222;letter-spacing:0px;transform:scaleX(0.9650);transform-origin:0 0;">Order</div>
<div class="a" style="left:154.95px;top:472.54px;font-size:8.4px;line-height:10.5px;font-weight:700;color:#222;letter-spacing:0px;transform:scaleX(0.9650);transform-origin:0 0;">Description</div>
<div class="a" style="left:361.96px;top:472.54px;font-size:8.4px;line-height:10.5px;font-weight:700;color:#222;letter-spacing:0px;transform:scaleX(0.9650);transform-origin:0 0;">Supplier</div>
<div class="a" style="right:342.46px;top:472.54px;font-size:8.4px;line-height:10.5px;font-weight:700;color:#222;letter-spacing:0px;transform:scaleX(0.9845);transform-origin:100% 0;">Ordered</div>
<div class="a" style="left:543.68px;top:472.54px;font-size:8.4px;line-height:10.5px;font-weight:700;color:#222;letter-spacing:0px;transform:scaleX(0.9650);transform-origin:0 0;">Currency</div>
<div class="a" style="left:621.95px;top:472.54px;font-size:8.4px;line-height:10.5px;font-weight:700;color:#222;letter-spacing:0px;transform:scaleX(0.9650);transform-origin:0 0;">Draft Status</div>
<div class="a" style="right:62.49px;top:472.54px;font-size:8.4px;line-height:10.5px;font-weight:700;color:#222;letter-spacing:0px;transform:scaleX(0.9778);transform-origin:100% 0;">Days in Draft</div>
<div class="a" style="left:50.70px;top:505.00px;width:769.30px;height:1.00px;background:#eeeeee;"></div>
<div class="a" style="left:93.54px;top:491.84px;font-size:8.4px;line-height:10.5px;font-weight:400;color:#284b72;letter-spacing:0px;transform:scaleX(0.8873);transform-origin:0 0;">162725</div>
<div class="a" style="left:361.59px;top:491.84px;font-size:8.4px;line-height:10.5px;font-weight:400;color:#284b72;letter-spacing:0px;transform:scaleX(0.8750);transform-origin:0 0;">Lee Supplies</div>
<div class="a" style="right:342.71px;top:491.84px;font-size:8.4px;line-height:10.5px;font-weight:400;color:#3a3a3a;letter-spacing:0px;transform:scaleX(0.8750);transform-origin:100% 0;">0.00</div>
<div class="a" style="left:543.43px;top:491.84px;font-size:8.4px;line-height:10.5px;font-weight:400;color:#3a3a3a;letter-spacing:0px;transform:scaleX(0.8750);transform-origin:0 0;">USD</div>
<div class="a" style="left:621.62px;top:491.84px;font-size:8.4px;line-height:10.5px;font-weight:400;color:#3a3a3a;letter-spacing:0px;transform:scaleX(0.8750);transform-origin:0 0;">Incomplete</div>
<div class="a" style="right:63.82px;top:491.84px;font-size:8.4px;line-height:10.5px;font-weight:400;color:#3a3a3a;letter-spacing:0px;transform:scaleX(0.8750);transform-origin:100% 0;">0</div>
<div class="a" style="left:50.70px;top:525.00px;width:769.30px;height:1.00px;background:#eeeeee;"></div>
<div class="a" style="left:93.54px;top:510.54px;font-size:8.4px;line-height:10.5px;font-weight:400;color:#284b72;letter-spacing:0px;transform:scaleX(0.8901);transform-origin:0 0;">162692</div>
<div class="a" style="left:154.89px;top:510.54px;font-size:8.4px;line-height:10.5px;font-weight:400;color:#3a3a3a;letter-spacing:0px;transform:scaleX(0.8750);transform-origin:0 0;">Recruiting expenses</div>
<div class="a" style="left:362.09px;top:510.54px;font-size:8.4px;line-height:10.5px;font-weight:400;color:#284b72;letter-spacing:0px;transform:scaleX(0.8750);transform-origin:0 0;">JGA</div>
<div class="a" style="right:342.72px;top:510.54px;font-size:8.4px;line-height:10.5px;font-weight:400;color:#3a3a3a;letter-spacing:0px;transform:scaleX(0.8750);transform-origin:100% 0;">191,816.00</div>
<div class="a" style="left:543.43px;top:510.54px;font-size:8.4px;line-height:10.5px;font-weight:400;color:#3a3a3a;letter-spacing:0px;transform:scaleX(0.8750);transform-origin:0 0;">USD</div>
<div class="a" style="left:621.62px;top:510.54px;font-size:8.4px;line-height:10.5px;font-weight:400;color:#3a3a3a;letter-spacing:0px;transform:scaleX(0.8750);transform-origin:0 0;">Incomplete Change Order</div>
<div class="a" style="right:63.77px;top:510.54px;font-size:8.4px;line-height:10.5px;font-weight:400;color:#3a3a3a;letter-spacing:0px;transform:scaleX(0.8750);transform-origin:100% 0;">43</div>
<div class="a" style="left:50.70px;top:543.00px;width:769.30px;height:1.00px;background:#eeeeee;"></div>
<div class="a" style="left:93.54px;top:529.24px;font-size:8.4px;line-height:10.5px;font-weight:400;color:#284b72;letter-spacing:0px;transform:scaleX(0.8880);transform-origin:0 0;">162378</div>
<div class="a" style="left:154.89px;top:529.24px;font-size:8.4px;line-height:10.5px;font-weight:400;color:#3a3a3a;letter-spacing:0px;transform:scaleX(0.8750);transform-origin:0 0;">Electricity Expenses</div>
<div class="a" style="left:361.63px;top:529.24px;font-size:8.4px;line-height:10.5px;font-weight:400;color:#284b72;letter-spacing:0px;transform:scaleX(0.8750);transform-origin:0 0;">US Gas and Electric</div>
<div class="a" style="right:342.71px;top:529.24px;font-size:8.4px;line-height:10.5px;font-weight:400;color:#3a3a3a;letter-spacing:0px;transform:scaleX(0.8750);transform-origin:100% 0;">27,335.00</div>
<div class="a" style="left:543.43px;top:529.24px;font-size:8.4px;line-height:10.5px;font-weight:400;color:#3a3a3a;letter-spacing:0px;transform:scaleX(0.8750);transform-origin:0 0;">USD</div>
<div class="a" style="left:621.69px;top:529.24px;font-size:8.4px;line-height:10.5px;font-weight:400;color:#3a3a3a;letter-spacing:0px;transform:scaleX(0.8750);transform-origin:0 0;">Rejected</div>
<div class="a" style="right:63.80px;top:529.24px;font-size:8.4px;line-height:10.5px;font-weight:400;color:#3a3a3a;letter-spacing:0px;transform:scaleX(0.8750);transform-origin:100% 0;">435</div>
<div class="a" style="left:50.70px;top:562.00px;width:769.30px;height:1.00px;background:#eeeeee;"></div>
<div class="a" style="left:93.54px;top:547.94px;font-size:8.4px;line-height:10.5px;font-weight:400;color:#284b72;letter-spacing:0px;transform:scaleX(0.8839);transform-origin:0 0;">162374</div>
<div class="a" style="left:154.89px;top:547.94px;font-size:8.4px;line-height:10.5px;font-weight:400;color:#3a3a3a;letter-spacing:0px;transform:scaleX(0.8750);transform-origin:0 0;">Event Fees</div>
<div class="a" style="left:361.59px;top:547.94px;font-size:8.4px;line-height:10.5px;font-weight:400;color:#284b72;letter-spacing:0px;transform:scaleX(0.8750);transform-origin:0 0;">EIP Inc</div>
<div class="a" style="right:342.71px;top:547.94px;font-size:8.4px;line-height:10.5px;font-weight:400;color:#3a3a3a;letter-spacing:0px;transform:scaleX(0.8750);transform-origin:100% 0;">47,573.00</div>
<div class="a" style="left:543.43px;top:547.94px;font-size:8.4px;line-height:10.5px;font-weight:400;color:#3a3a3a;letter-spacing:0px;transform:scaleX(0.8750);transform-origin:0 0;">USD</div>
<div class="a" style="left:621.69px;top:547.94px;font-size:8.4px;line-height:10.5px;font-weight:400;color:#3a3a3a;letter-spacing:0px;transform:scaleX(0.8750);transform-origin:0 0;">Rejected</div>
<div class="a" style="right:63.80px;top:547.94px;font-size:8.4px;line-height:10.5px;font-weight:400;color:#3a3a3a;letter-spacing:0px;transform:scaleX(0.8750);transform-origin:100% 0;">435</div>
<div class="a" style="left:50.70px;top:580.00px;width:769.30px;height:1.00px;background:#eeeeee;"></div>
<div class="a" style="left:93.54px;top:566.64px;font-size:8.4px;line-height:10.5px;font-weight:400;color:#284b72;letter-spacing:0px;transform:scaleX(0.8873);transform-origin:0 0;">162725</div>
<div class="a" style="left:361.59px;top:566.64px;font-size:8.4px;line-height:10.5px;font-weight:400;color:#284b72;letter-spacing:0px;transform:scaleX(0.8750);transform-origin:0 0;">Lee Supplies</div>
<div class="a" style="right:342.71px;top:566.64px;font-size:8.4px;line-height:10.5px;font-weight:400;color:#3a3a3a;letter-spacing:0px;transform:scaleX(0.8750);transform-origin:100% 0;">0.00</div>
<div class="a" style="left:543.43px;top:566.64px;font-size:8.4px;line-height:10.5px;font-weight:400;color:#3a3a3a;letter-spacing:0px;transform:scaleX(0.8750);transform-origin:0 0;">USD</div>
<div class="a" style="left:621.62px;top:566.64px;font-size:8.4px;line-height:10.5px;font-weight:400;color:#3a3a3a;letter-spacing:0px;transform:scaleX(0.8750);transform-origin:0 0;">Incomplete</div>
<div class="a" style="right:63.82px;top:566.64px;font-size:8.4px;line-height:10.5px;font-weight:400;color:#3a3a3a;letter-spacing:0px;transform:scaleX(0.8750);transform-origin:100% 0;">0</div>
<div class="a" style="left:50.70px;top:599.00px;width:769.30px;height:1.00px;background:#eeeeee;"></div>
<div class="a" style="left:93.54px;top:585.34px;font-size:8.4px;line-height:10.5px;font-weight:400;color:#284b72;letter-spacing:0px;transform:scaleX(0.8901);transform-origin:0 0;">162692</div>
<div class="a" style="left:154.89px;top:585.34px;font-size:8.4px;line-height:10.5px;font-weight:400;color:#3a3a3a;letter-spacing:0px;transform:scaleX(0.8750);transform-origin:0 0;">Recruiting expenses</div>
<div class="a" style="left:362.09px;top:585.34px;font-size:8.4px;line-height:10.5px;font-weight:400;color:#284b72;letter-spacing:0px;transform:scaleX(0.8750);transform-origin:0 0;">JGA</div>
<div class="a" style="right:342.72px;top:585.34px;font-size:8.4px;line-height:10.5px;font-weight:400;color:#3a3a3a;letter-spacing:0px;transform:scaleX(0.8750);transform-origin:100% 0;">191,816.00</div>
<div class="a" style="left:543.43px;top:585.34px;font-size:8.4px;line-height:10.5px;font-weight:400;color:#3a3a3a;letter-spacing:0px;transform:scaleX(0.8750);transform-origin:0 0;">USD</div>
<div class="a" style="left:621.62px;top:585.34px;font-size:8.4px;line-height:10.5px;font-weight:400;color:#3a3a3a;letter-spacing:0px;transform:scaleX(0.8750);transform-origin:0 0;">Incomplete Change Order</div>
<div class="a" style="right:63.77px;top:585.34px;font-size:8.4px;line-height:10.5px;font-weight:400;color:#3a3a3a;letter-spacing:0px;transform:scaleX(0.8750);transform-origin:100% 0;">43</div>
<div class="a" style="left:50.70px;top:618.00px;width:769.30px;height:1.00px;background:#eeeeee;"></div>
<div class="a" style="left:93.54px;top:604.04px;font-size:8.4px;line-height:10.5px;font-weight:400;color:#284b72;letter-spacing:0px;transform:scaleX(0.8880);transform-origin:0 0;">162378</div>
<div class="a" style="left:154.89px;top:604.04px;font-size:8.4px;line-height:10.5px;font-weight:400;color:#3a3a3a;letter-spacing:0px;transform:scaleX(0.8750);transform-origin:0 0;">Electricity Expenses</div>
<div class="a" style="left:361.63px;top:604.04px;font-size:8.4px;line-height:10.5px;font-weight:400;color:#284b72;letter-spacing:0px;transform:scaleX(0.8750);transform-origin:0 0;">US Gas and Electric</div>
<div class="a" style="right:342.71px;top:604.04px;font-size:8.4px;line-height:10.5px;font-weight:400;color:#3a3a3a;letter-spacing:0px;transform:scaleX(0.8750);transform-origin:100% 0;">27,335.00</div>
<div class="a" style="left:543.43px;top:604.04px;font-size:8.4px;line-height:10.5px;font-weight:400;color:#3a3a3a;letter-spacing:0px;transform:scaleX(0.8750);transform-origin:0 0;">USD</div>
<div class="a" style="left:621.69px;top:604.04px;font-size:8.4px;line-height:10.5px;font-weight:400;color:#3a3a3a;letter-spacing:0px;transform:scaleX(0.8750);transform-origin:0 0;">Rejected</div>
<div class="a" style="right:63.80px;top:604.04px;font-size:8.4px;line-height:10.5px;font-weight:400;color:#3a3a3a;letter-spacing:0px;transform:scaleX(0.8750);transform-origin:100% 0;">435</div>
<div class="a" style="left:50.70px;top:636.00px;width:769.30px;height:1.00px;background:#eeeeee;"></div>
<div class="a" style="left:93.54px;top:622.74px;font-size:8.4px;line-height:10.5px;font-weight:400;color:#284b72;letter-spacing:0px;transform:scaleX(0.8839);transform-origin:0 0;">162374</div>
<div class="a" style="left:154.89px;top:622.74px;font-size:8.4px;line-height:10.5px;font-weight:400;color:#3a3a3a;letter-spacing:0px;transform:scaleX(0.8750);transform-origin:0 0;">Event Fees</div>
<div class="a" style="left:361.59px;top:622.74px;font-size:8.4px;line-height:10.5px;font-weight:400;color:#284b72;letter-spacing:0px;transform:scaleX(0.8750);transform-origin:0 0;">EIP Inc</div>
<div class="a" style="right:342.71px;top:622.74px;font-size:8.4px;line-height:10.5px;font-weight:400;color:#3a3a3a;letter-spacing:0px;transform:scaleX(0.8750);transform-origin:100% 0;">47,573.00</div>
<div class="a" style="left:543.43px;top:622.74px;font-size:8.4px;line-height:10.5px;font-weight:400;color:#3a3a3a;letter-spacing:0px;transform:scaleX(0.8750);transform-origin:0 0;">USD</div>
<div class="a" style="left:621.69px;top:622.74px;font-size:8.4px;line-height:10.5px;font-weight:400;color:#3a3a3a;letter-spacing:0px;transform:scaleX(0.8750);transform-origin:0 0;">Rejected</div>
<div class="a" style="right:63.80px;top:622.74px;font-size:8.4px;line-height:10.5px;font-weight:400;color:#3a3a3a;letter-spacing:0px;transform:scaleX(0.8750);transform-origin:100% 0;">435</div>
<div class="a" style="left:50.70px;top:660.00px;width:769.30px;height:1.00px;background:#eeeeee;"></div>
<div class="a" style="left:93.54px;top:641.44px;font-size:8.4px;line-height:10.5px;font-weight:400;color:#284b72;letter-spacing:0px;transform:scaleX(0.8880);transform-origin:0 0;">162373</div>
<div class="a" style="left:154.89px;top:641.44px;font-size:8.4px;line-height:10.5px;font-weight:400;color:#3a3a3a;letter-spacing:0px;transform:scaleX(0.8750);transform-origin:0 0;">Exhibition Fees</div>
<div class="a" style="left:361.59px;top:641.44px;font-size:8.4px;line-height:10.5px;font-weight:400;color:#284b72;letter-spacing:0px;transform:scaleX(0.8750);transform-origin:0 0;">EIP Inc</div>
<div class="a" style="right:342.71px;top:641.44px;font-size:8.4px;line-height:10.5px;font-weight:400;color:#3a3a3a;letter-spacing:0px;transform:scaleX(0.8750);transform-origin:100% 0;">95,146.00</div>
<div class="a" style="left:543.43px;top:641.44px;font-size:8.4px;line-height:10.5px;font-weight:400;color:#3a3a3a;letter-spacing:0px;transform:scaleX(0.8750);transform-origin:0 0;">USD</div>
<div class="a" style="left:621.69px;top:641.44px;font-size:8.4px;line-height:10.5px;font-weight:400;color:#3a3a3a;letter-spacing:0px;transform:scaleX(0.8750);transform-origin:0 0;">Rejected</div>
<div class="a" style="right:63.80px;top:641.44px;font-size:8.4px;line-height:10.5px;font-weight:400;color:#3a3a3a;letter-spacing:0px;transform:scaleX(0.8750);transform-origin:100% 0;">435</div>
<svg class="a" style="left:76.4px;top:510.8px" width="9" height="9" viewBox="0 0 9 9"><circle cx="4.5" cy="4.5" r="4.4" fill="#1b74b6"/><circle cx="4.5" cy="4.5" r="3.7" fill="#1f82c6"/><rect x="3.7" y="3.7" width="1.6" height="3.6" rx="0.5" fill="#d8f1ff"/><circle cx="4.5" cy="2.4" r="0.8" fill="#d8f1ff"/></svg>
<div class="a" style="left:820.50px;top:487.50px;width:10.50px;height:161.50px;background:#f4f4f4;"></div>
<div class="a" style="left:821.00px;top:499.00px;width:9.00px;height:139.00px;background:#c2c2c2;"></div>
<svg class="a" style="left:822.7px;top:491.7px" width="5" height="3.5" viewBox="0 0 5 3.5"><path d="M0 3.2 L5 3.2 L2.5 0 Z" fill="#8a8a8a"/></svg>
<svg class="a" style="left:822.5px;top:646px" width="6" height="4" viewBox="0 0 6 4"><path d="M0 0 L6 0 L3 3.5 Z" fill="#222"/></svg>
<svg class="a" style="left:339px;top:86px" width="10" height="14" viewBox="0 0 10 14"><path d="M0.7 0.7 L0.7 11 L3.2 8.8 L5 12.6 L6.6 11.9 L5 8.2 L8.4 8.2 Z" fill="#fff" stroke="#222" stroke-width="1"/></svg>
<div class="a" style="left:0.00px;top:649.70px;width:880.00px;height:3.30px;background:#2a5679;"></div>
<div class="a" style="left:4.00px;top:649.70px;width:872.00px;height:1.00px;background:#234868;"></div>
</body></html>
